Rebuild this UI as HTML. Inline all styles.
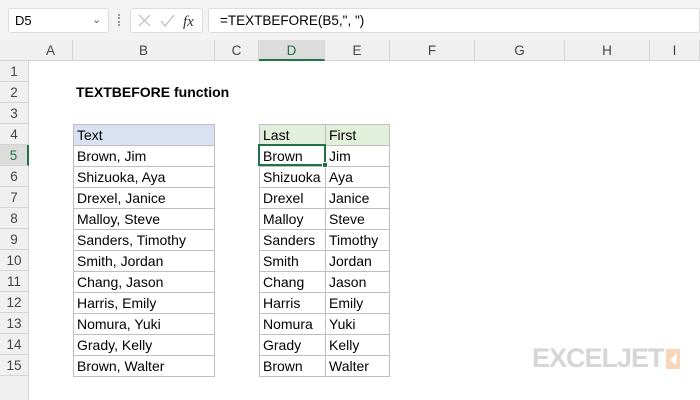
<!DOCTYPE html><html><head><style>
body{margin:0;width:700px;height:400px;overflow:hidden;background:#fff;font-family:"Liberation Sans",sans-serif;position:relative}
.a{position:absolute;box-sizing:border-box}
.t{font-size:14px;line-height:21px;padding-left:3px;color:#000;white-space:nowrap}
</style></head><body>
<div class="a" style="left:0;top:0;width:700px;height:40px;background:#f3f3f3"></div>
<div class="a" style="left:8px;top:8px;width:101px;height:25px;background:#fff;border:1px solid #dcdcdc;border-radius:3px;font-size:13px;line-height:23px;padding-left:6px">D5</div>
<div class="a" style="left:92px;top:13px;font-size:11px;color:#555">&#8964;</div>
<div class="a" style="left:118px;top:14px;width:2px;height:12px;border-left:2px dotted #999"></div>
<div class="a" style="left:130px;top:8px;width:73px;height:25px;background:#fff;border:1px solid #dcdcdc;border-radius:3px"></div>
<svg class="a" style="left:137px;top:13px" width="70" height="16"><path d="M2 2l11 11M13 2L2 13" stroke="#bbb" stroke-width="1.2" fill="none"/><path d="M24 8l4 5 9-11" stroke="#bbb" stroke-width="1.2" fill="none"/><text x="46" y="13" font-family="Liberation Serif" font-style="italic" font-size="15" fill="#333">fx</text></svg>
<div class="a" style="left:208px;top:8px;width:492px;height:25px;background:#fff;border:1px solid #dcdcdc;border-radius:3px;font-size:13.5px;line-height:23px;padding-left:11px">=TEXTBEFORE(B5,", ")</div>
<div class="a" style="left:0;top:40px;width:700px;height:21px;background:#f0f0f0;border-bottom:1px solid #d4d4d4"></div>
<div class="a" style="left:0;top:61px;width:29px;height:339px;background:#f0f0f0;border-right:1px solid #d4d4d4"></div>
<div class="a" style="left:73px;top:124px;width:142px;height:21px;background:#d9e1f2"></div>
<div class="a" style="left:259px;top:124px;width:131px;height:21px;background:#e2efda"></div>
<div id="g"></div>
<script>
var g='',cols=[['A',29,73],['B',73,215],['C',215,259],['D',259,325],['E',325,390],['F',390,475],['G',475,565],['H',565,650],['I',650,700]];
cols.forEach(function(c){g+='<div class="a" style="left:'+c[1]+'px;top:40px;width:'+(c[2]-c[1])+'px;height:21px;border-right:1px solid #d4d4d4;text-align:center;font-size:13.5px;line-height:21px;color:#444;'+(c[0]=='D'?'background:#dcdcdc;border-bottom:2px solid #217346;color:#217346':'')+'">'+c[0]+'</div>';});
for(var r=1;r<=15;r++){var y=61+(r-1)*21;g+='<div class="a" style="left:0;top:'+y+'px;width:29px;height:21px;border-bottom:1px solid #d4d4d4;text-align:center;font-size:13.5px;line-height:21px;color:#444;'+(r==5?'background:#dcdcdc;border-right:2px solid #217346;color:#217346':'border-right:1px solid #d4d4d4')+'">'+r+'</div>';}
g+='<div class="a t" style="left:73px;top:82px;font-weight:bold">TEXTBEFORE function</div>';
var d=[['Brown, Jim','Brown','Jim'],['Shizuoka, Aya','Shizuoka','Aya'],['Drexel, Janice','Drexel','Janice'],['Malloy, Steve','Malloy','Steve'],['Sanders, Timothy','Sanders','Timothy'],['Smith, Jordan','Smith','Jordan'],['Chang, Jason','Chang','Jason'],['Harris, Emily','Harris','Emily'],['Nomura, Yuki','Nomura','Yuki'],['Grady, Kelly','Grady','Kelly'],['Brown, Walter','Brown','Walter']];
d.unshift(['Text','Last','First']);
d.forEach(function(x,i){var y=124+i*21;
g+='<div class="a t" style="left:73px;top:'+y+'px;width:142px;height:22px;border:1px solid #bfbfbf">'+x[0]+'</div>';
g+='<div class="a t" style="left:259px;top:'+y+'px;width:67px;height:22px;border:1px solid #bfbfbf">'+x[1]+'</div>';
g+='<div class="a t" style="left:325px;top:'+y+'px;width:65px;height:22px;border:1px solid #bfbfbf">'+x[2]+'</div>';});
g+='<div class="a" style="left:258px;top:144px;width:68px;height:22px;border:2px solid #217346"></div><div class="a" style="left:322px;top:162px;width:6px;height:6px;background:#217346;border:1px solid #fff"></div>';
g+='<div class="a" style="left:532px;top:345px;font:bold 27px/27px \'Liberation Sans\',sans-serif;color:#d6d6d6;letter-spacing:-1px">EXCELJET</div><div class="a" style="left:666px;top:349px;width:14px;height:20px;background:#f8d5bb"></div><svg class="a" style="left:666px;top:349px" width="14" height="20"><path d="M11 4L4 11l6 5z" fill="#fff"/></svg>';
document.getElementById('g').outerHTML=g;
</script>
</body></html>
